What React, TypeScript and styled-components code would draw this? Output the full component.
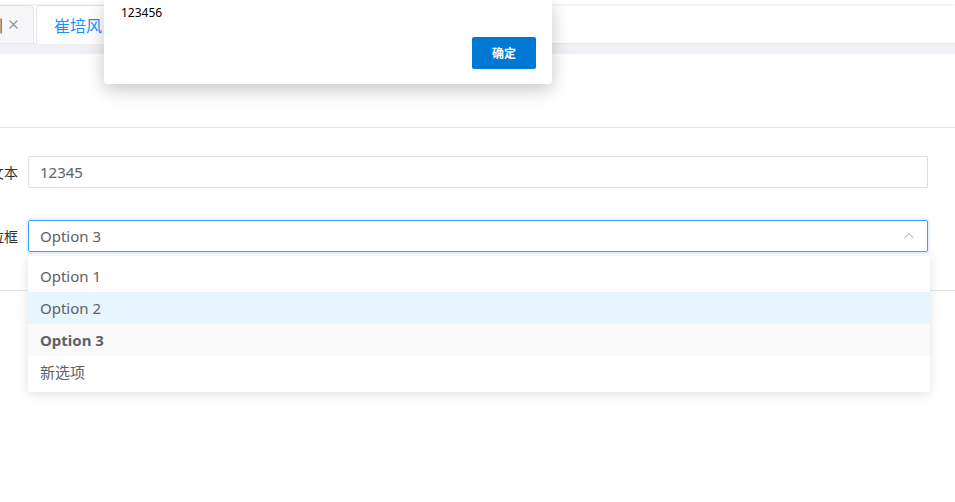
import React from 'react';
import styled, { createGlobalStyle } from 'styled-components';

const GlobalStyle = createGlobalStyle`
  html, body {
    margin: 0;
    padding: 0;
    background: #ffffff;
    overflow: hidden;
  }
  body {
    font-family: "Noto Sans", "Noto Sans CJK SC", sans-serif;
    color: #606266;
  }
`;

const Page = styled.div`
  position: relative;
  width: 955px;
  height: 502px;
  overflow: hidden;
  background: #fff;
`;

const TopShade = styled.div`
  height: 4px;
  background: #fff;
  box-shadow: 0 1px 3px rgba(0, 0, 0, 0.08);
  position: relative;
  z-index: 1;
`;

const TabBar = styled.div`
  display: flex;
  align-items: flex-end;
  height: 40px;
  padding-top: 1px;
  border-bottom: 1px solid #e4e7ed;
  box-sizing: border-box;
`;

const Tab = styled.div<{ $active?: boolean; $offset?: number }>`
  display: flex;
  align-items: center;
  gap: 6px;
  height: 39px;
  box-sizing: border-box;
  padding: 0 15px 0 17px;
  margin-left: ${(p) => p.$offset ?? 3}px;
  margin-bottom: -1px;
  border: 1px solid #e4e7ed;
  border-bottom-color: ${(p) => (p.$active ? '#fff' : '#e4e7ed')};
  border-radius: 4px 4px 0 0;
  background: ${(p) => (p.$active ? '#fff' : '#f7f7f9')};
  color: ${(p) => (p.$active ? '#1890ff' : '#606266')};
  font-size: 16px;
  white-space: nowrap;
`;

const Strip = styled.div`
  height: 10px;
  background: #f0f1f5;
`;

const Toolbar = styled.div`
  height: 73px;
  border-bottom: 1px solid #e5e5e5;
`;

const Form = styled.div`
  display: flex;
  flex-direction: column;
  gap: 32px;
  padding: 28px 27px 38px 0;
  border-bottom: 1px solid #e5e5e5;
`;

const Row = styled.div`
  position: relative;
  display: flex;
  align-items: center;
  gap: 10px;
`;

const Label = styled.div`
  flex: 0 0 18px;
  width: 18px;
  min-width: 0;
  display: flex;
  justify-content: flex-end;
  white-space: nowrap;
  font-size: 14px;
  color: #303133;
`;

const Field = styled.div<{ $focused?: boolean }>`
  flex: 1;
  display: flex;
  align-items: center;
  justify-content: space-between;
  height: 32px;
  box-sizing: border-box;
  padding: 0 12px 0 11px;
  border: 1px solid ${(p) => (p.$focused ? '#409eff' : '#dcdfe6')};
  border-radius: 2px;
  box-shadow: ${(p) => (p.$focused ? '0 0 0 2px rgba(64,158,255,0.12)' : 'none')};
  font-size: 15px;
  color: #606266;
`;

const Dropdown = styled.ul`
  position: absolute;
  top: 36px;
  left: 28px;
  right: -2px;
  margin: 0;
  padding: 4px 0;
  list-style: none;
  background: #fff;
  box-shadow: 0 2px 12px rgba(0, 0, 0, 0.12);
  border-radius: 2px;
  z-index: 5;
`;

const Option = styled.li<{ $hover?: boolean; $selected?: boolean }>`
  height: 32px;
  line-height: 32px;
  padding: 0 12px;
  font-size: 15px;
  color: #606266;
  font-weight: ${(p) => (p.$selected ? 700 : 400)};
  background: ${(p) => (p.$hover ? '#e6f5fe' : p.$selected ? '#fafafa' : '#fff')};
`;

const Modal = styled.div`
  position: absolute;
  top: 0;
  left: 104px;
  width: 448px;
  box-sizing: border-box;
  padding: 4px 16px 15px 17px;
  background: #fff;
  border-radius: 0 0 4px 4px;
  box-shadow: 0 6px 18px rgba(0, 0, 0, 0.22);
  z-index: 10;
`;

const ModalText = styled.div`
  font-size: 12px;
  line-height: 18px;
  color: #000;
`;

const ModalFooter = styled.div`
  display: flex;
  justify-content: flex-end;
  margin-top: 15px;
`;

const PrimaryButton = styled.button`
  width: 64px;
  height: 32px;
  border: none;
  border-radius: 2px;
  background: #0078d4;
  color: #fff;
  font-family: inherit;
  font-size: 12px;
  font-weight: 600;
`;

const Chevron = () => (
  <svg width="12" height="12" viewBox="0 0 12 12" fill="none">
    <path d="M1.5 8 L6 3.5 L10.5 8" stroke="#c0c4cc" strokeWidth="1.2" />
  </svg>
);

const CloseIcon = () => (
  <svg width="9" height="9" viewBox="0 0 9 9" fill="none">
    <path d="M0.5 0.5 L8.5 8.5 M8.5 0.5 L0.5 8.5" stroke="#909399" strokeWidth="1.1" />
  </svg>
);

const options = ['Option 1', 'Option 2', 'Option 3', '新选项'];

export default function App() {
  return (
    <>
      <GlobalStyle />
      <Page>
        <TopShade />
        <TabBar>
          <Tab $offset={-47}>
            深圳
            <CloseIcon />
          </Tab>
          <Tab $active $offset={2}>
            崔培风
            <CloseIcon />
          </Tab>
        </TabBar>
        <Strip />
        <Toolbar />
        <Form>
          <Row>
            <Label>文本</Label>
            <Field>12345</Field>
          </Row>
          <Row>
            <Label>下拉框</Label>
            <Field $focused>
              Option 3
              <Chevron />
            </Field>
            <Dropdown>
              {options.map((o) => (
                <Option key={o} $hover={o === 'Option 2'} $selected={o === 'Option 3'}>
                  {o}
                </Option>
              ))}
            </Dropdown>
          </Row>
        </Form>
        <Modal>
          <ModalText>123456</ModalText>
          <ModalFooter>
            <PrimaryButton>确定</PrimaryButton>
          </ModalFooter>
        </Modal>
      </Page>
    </>
  );
}
